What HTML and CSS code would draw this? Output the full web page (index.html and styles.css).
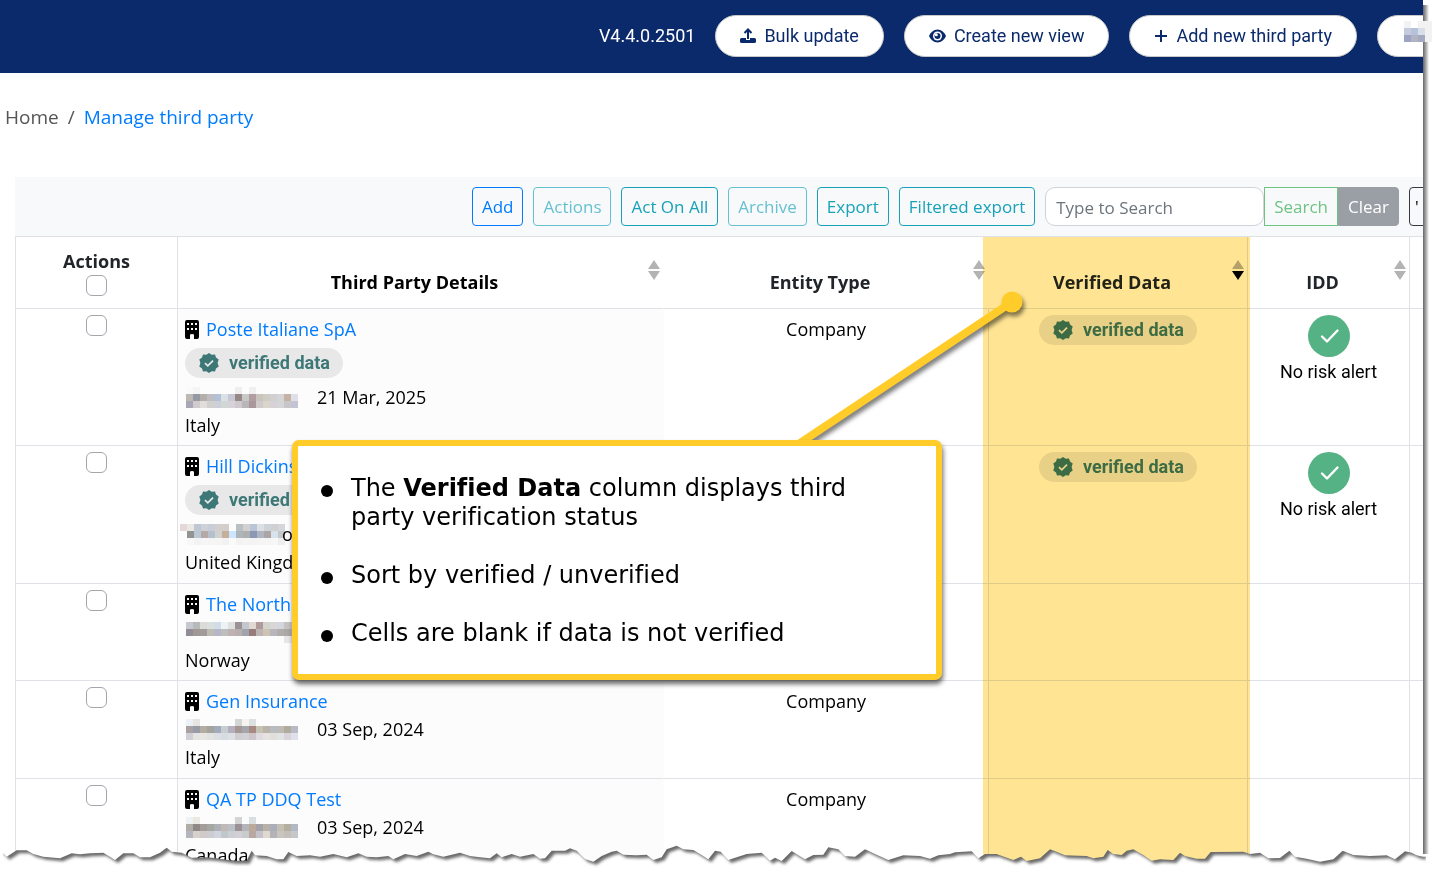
FILE: index.html
```
<!DOCTYPE html>
<html lang="en">
<head>
    <meta charset="UTF-8">
    <meta name="viewport" content="width=device-width, initial-scale=1.0">
    <title>Manage third party</title>
    <link rel="stylesheet" href="styles.css">
</head>
<body>
    <!-- Shared icons -->
    <svg class="sprite" aria-hidden="true">
        <symbol id="building" viewBox="0 0 14 19">
            <path fill-rule="evenodd" d="M2 0H12Q14 0 14 2V17Q14 19 12 19H9V15Q9 14 7 14Q5 14 5 15V19H2Q0 19 0 17V2Q0 0 2 0ZM2 3V5H4V3ZM6 3V5H8V3ZM10 3V5H12V3ZM2 8V10H4V8ZM6 8V10H8V8ZM10 8V10H12V8Z"/>
        </symbol>
        <symbol id="verified" viewBox="0 0 20 20">
            <path fill="#3d7876" d="M10 0L12.7 1.8L16 1.5L17 4.6L19.7 6.5L18.6 10L19.7 13.5L17 15.4L16 18.5L12.7 18.2L10 20L7.3 18.2L4 18.5L3 15.4L.3 13.5L1.4 10L.3 6.5L3 4.6L4 1.5L7.3 1.8Z"/>
            <path fill="none" stroke="#e8e8e8" stroke-width="1.8" d="M6 10.2L8.8 12.8L14 7.6"/>
        </symbol>
        <symbol id="tick" viewBox="0 0 42 42">
            <circle cx="21" cy="21" r="21" fill="#55b285"/>
            <path fill="none" stroke="#fff" stroke-width="2.4" stroke-linecap="round" stroke-linejoin="round" d="M14 21.5L19 26.5L29.500 15.500"/>
        </symbol>
        <symbol id="sort" viewBox="0 0 12 20">
            <path d="M6 0L12 9H0Z"/>
            <path class="down" d="M0 11H12L6 20Z"/>
        </symbol>
    </svg>

    <div class="page">
        <div class="screen">
            <header class="topbar">
                <span class="version">V4.4.0.2501</span>
                <button class="pill-btn" type="button">
                    <svg width="16" height="16" viewBox="0 0 16 16" fill="none" stroke="#0b2a6b" stroke-width="2"><path d="M8 11V1.500M4.500 5L8 1.500L11.500 5"/><path fill="#0b2a6b" stroke="none" d="M1.500 10H6V12H10V10H14.500Q16 10 16 11.500V13.500Q16 15 14.500 15H1.500Q0 15 0 13.500V11.500Q0 10 1.500 10Z"/></svg>
                    Bulk update
                </button>
                <button class="pill-btn" type="button">
                    <svg width="17" height="16" viewBox="0 0 17 16"><path fill="#0b2a6b" d="M8.500 1.500C12.500 1.500 15.500 4.500 17 8C15.500 11.500 12.500 14.500 8.500 14.500S1.500 11.500 0 8C1.500 4.500 4.500 1.500 8.500 1.500Z"/><circle cx="8.500" cy="8" r="4.500" fill="#fff"/><circle cx="8.500" cy="8" r="3" fill="#0b2a6b"/><circle cx="7.300" cy="6.800" r="1.500" fill="#fff"/></svg>
                    Create new view
                </button>
                <button class="pill-btn" type="button">
                    <svg width="14" height="14" viewBox="0 0 14 14"><path fill="none" stroke="#0b2a6b" stroke-width="2" d="M7 1V13M1 7H13"/></svg>
                    Add new third party
                </button>
                <button class="pill-btn account" type="button" aria-label="Account"></button>
            </header>

            <nav class="breadcrumb">
                <a class="home" href="#">Home</a>
                <span>/</span>
                <a href="#">Manage third party</a>
            </nav>

            <main class="grid">
                <div class="toolbar">
                    <button class="btn btn-blue" type="button">Add</button>
                    <button class="btn" type="button" disabled>Actions</button>
                    <button class="btn" type="button">Act On All</button>
                    <button class="btn" type="button" disabled>Archive</button>
                    <button class="btn" type="button">Export</button>
                    <button class="btn" type="button">Filtered export</button>
                    <div class="search">
                        <input type="text" placeholder="Type to Search" aria-label="Type to Search">
                        <button class="btn btn-search" type="button">Search</button>
                        <button class="btn btn-clear" type="button">Clear</button>
                    </div>
                    <button class="btn btn-more" type="button">'</button>
                </div>

                <table>
                    <colgroup>
                        <col class="col-actions">
                        <col>
                        <col class="col-entity">
                        <col class="col-verified">
                        <col class="col-idd">
                        <col class="col-next">
                    </colgroup>
                    <thead>
                        <tr>
                            <th class="actions"><label for="all">Actions</label><input type="checkbox" id="all"></th>
                            <th>Third Party Details<svg class="sort"><use href="#sort"/></svg></th>
                            <th class="entity">Entity Type<svg class="sort"><use href="#sort"/></svg></th>
                            <th>Verified Data<svg class="sort desc"><use href="#sort"/></svg></th>
                            <th>IDD<svg class="sort"><use href="#sort"/></svg></th>
                            <th></th>
                        </tr>
                    </thead>
                    <tbody>
                        <tr>
                            <td><input type="checkbox" aria-label="Poste Italiane SpA"></td>
                            <td class="details">
                                <div class="line"><svg class="building"><use href="#building"/></svg><a href="#">Poste Italiane SpA</a></div>
                                <div class="tag"><svg><use href="#verified"/></svg>verified data</div>
                                <div class="line"><svg class="mosaic" data-blocks="0"></svg>21 Mar, 2025</div>
                                <div class="line">Italy</div>
                            </td>
                            <td>Company</td>
                            <td><div class="tag"><svg><use href="#verified"/></svg>verified data</div></td>
                            <td class="idd"><svg><use href="#tick"/></svg><div>No risk alert</div></td>
                            <td></td>
                        </tr>
                        <tr>
                            <td><input type="checkbox" aria-label="Hill Dickinson"></td>
                            <td class="details">
                                <div class="line"><svg class="building"><use href="#building"/></svg><a href="#">Hill Dickinson</a></div>
                                <div class="tag"><svg><use href="#verified"/></svg>verified data</div>
                                <div class="line"><svg class="mosaic wide" data-blocks="1"></svg>os</div>
                                <div class="line">United Kingdom</div>
                            </td>
                            <td></td>
                            <td><div class="tag"><svg><use href="#verified"/></svg>verified data</div></td>
                            <td class="idd"><svg><use href="#tick"/></svg><div>No risk alert</div></td>
                            <td></td>
                        </tr>
                        <tr>
                            <td><input type="checkbox" aria-label="The North"></td>
                            <td class="details">
                                <div class="line"><svg class="building"><use href="#building"/></svg><a href="#">The North</a></div>
                                <div class="line"><svg class="mosaic" data-blocks="2"></svg></div>
                                <div class="line">Norway</div>
                            </td>
                            <td></td>
                            <td></td>
                            <td></td>
                            <td></td>
                        </tr>
                        <tr>
                            <td><input type="checkbox" aria-label="Gen Insurance"></td>
                            <td class="details">
                                <div class="line"><svg class="building"><use href="#building"/></svg><a href="#">Gen Insurance</a></div>
                                <div class="line"><svg class="mosaic" data-blocks="3"></svg>03 Sep, 2024</div>
                                <div class="line">Italy</div>
                            </td>
                            <td>Company</td>
                            <td></td>
                            <td></td>
                            <td></td>
                        </tr>
                        <tr>
                            <td><input type="checkbox" aria-label="QA TP DDQ Test"></td>
                            <td class="details">
                                <div class="line"><svg class="building"><use href="#building"/></svg><a href="#">QA TP DDQ Test</a></div>
                                <div class="line"><svg class="mosaic" data-blocks="4"></svg>03 Sep, 2024</div>
                                <div class="line">Canada</div>
                            </td>
                            <td>Company</td>
                            <td></td>
                            <td></td>
                            <td></td>
                        </tr>
                    </tbody>
                </table>
                <div class="highlight"></div>
            </main>
        </div>

        <!-- Callout -->
        <svg class="pointer" width="240" height="170" viewBox="0 0 240 170">
            <path d="M10 158L222 17" stroke="#ffcc29" stroke-width="8"/>
            <circle cx="222" cy="17" r="10.500" fill="#ffcc29"/>
        </svg>
        <div class="callout">
            <ul>
                <li>The <b>Verified Data</b> column displays third party verification status</li>
                <li>Sort by verified / unverified</li>
                <li>Cells are blank if data is not verified</li>
            </ul>
        </div>

        <!-- Torn paper edge -->
        <div class="side-shadow"></div>
        <svg class="mosaic account-mosaic" data-blocks="5"></svg>
        <svg class="tear" viewBox="0 0 4299 282" preserveAspectRatio="none">
            <defs>
                <path id="edge" d="M0 210L20 230 50 211 80 211 100 222 130 230 180 235 215 220 240 223 270 220 310 218 330 230 345 240 370 220 400 220 420 232 450 232 480 218 500 203 515 215 545 218 575 233 620 232 650 235 700 242 740 242 755 212 765 226 800 228 830 238 850 238 865 216 890 228 930 226 960 230 1000 222 1040 232 1075 220 1100 230 1130 232 1165 228 1180 238 1215 222 1250 228 1285 215 1300 223 1330 230 1380 218 1410 228 1440 232 1470 235 1490 220 1505 232 1535 222 1560 230 1600 222 1620 236 1635 235 1655 212 1695 212 1710 205 1730 212 1755 237 1780 245 1805 228 1835 215 1850 212 1870 224 1910 226 1940 224 1960 240 1985 232 2000 208 2030 197 2050 208 2080 210 2105 225 2125 238 2145 212 2162 215 2185 240 2210 232 2240 222 2285 218 2310 242 2325 233 2345 243 2375 213 2415 238 2440 225 2470 224 2485 202 2515 208 2535 228 2565 230 2595 208 2625 222 2665 240 2710 226 2760 228 2790 236 2815 226 2850 222 2865 217 2915 214 2935 235 2955 222 2990 222 3000 226 3040 240 3063 230 3080 243 3120 235 3150 208 3170 215 3195 226 3260 228 3280 235 3310 230 3323 210 3340 222 3365 225 3380 212 3400 208 3430 225 3455 242 3480 238 3520 240 3540 218 3555 228 3590 236 3615 236 3632 216 3730 215 3750 222 3780 218 3805 235 3840 234 3868 212 3885 230 3920 236 3960 245 4000 238 4028 212 4060 225 4110 228 4160 226 4185 238 4215 214 4235 218 4250 226 4269 230V0H0Z"/>
                <mask id="below" maskUnits="userSpaceOnUse" x="0" y="190" width="4299" height="92">
                    <rect y="190" width="4299" height="92" fill="#fff"/>
                    <use href="#edge" fill="#000"/>
                    <rect x="4269" width="30" height="230" fill="#000"/>
                </mask>
                <filter id="soft" x="0" y="0" width="1" height="1.2"><feGaussianBlur stdDeviation="5"/></filter>
            </defs>
            <g mask="url(#below)">
                <rect width="4299" height="282" fill="#fff"/>
                <use href="#edge" x="9" y="9" fill="#6a6a6a" filter="url(#soft)"/>
            </g>
        </svg>
    </div>

    <script>
        // Block colours for hidden names, one string of hex colours per row, '-' is empty
        const blocks = [
            [
                'f8fafc f5f5f5 - - - - - efedf0 - f0f0f3 - - - - - -',
                'bfb9b3 9599a3 b5afab c0bcc2 b4c0d6 d9e0e6 c6c8d4 978888 c8c8c8 b09ea0 c9c5bc ceccc3 d0d0d0 d5d5d8 c4b3a4 dfdfe8',
                'a9a6b8 d0cbcf e0ddda d0d0ce cdced8 cfd8d2 d5d3d8 cfc9cd b9b6b9 a8989b d0cbca dad6ce d5d1d4 d5d5d7 c8c6c8 c2c4d3'
            ],
            [
                'e2d9d8 e9e8e3 bfc8d2 ccd2d8 c9cdd8 d4cecd d5cccc - b9c0c2 d4d0d0 bac4d9 dce0e4 cdd3d8 d0d0d0 d5d6d9',
                '- 909593 bcc8d4 b5a9a5 b6bfcc cfd2ce c6ae98 cce6ff aeb6ba aeb0b0 8c98b4 aeb6c2 ada4a4 d6e3ec c6c7c8',
                '- f8f8f8 f3f3f3 f6f6f6 f5f5f5 f5f5f5 f2f2f2 fafafa f3f3f3 f5f5f5 f4f4f4 f5f5f5 f5f5f5 f7f7f7 eeeeee'
            ],
            [
                'c6c8d2 b7babb dbdbd8 d9dedf d0dde7 edf2f6 dfe1df 9b9297 c5c7cf e1d8d4 b09b9a d2d5cd d9d6d5 d3d6df c6c2bf d0d0d0',
                '928d94 a19795 a19c9b bdbdb5 b5b7c8 bebfbc beb2b2 b9afad a0a4ae 987c7c bdb4b4 cdc2b3 b8b6ba b1adab ada7a8 c8c0b8',
                '- - - - - - - - - - - - - - e7e7e7 ececec'
            ],
            [
                'eaf1f7 e8e4e2 - - - - - d4d6d5 f7f4ee dce0e1 - - - - - -',
                'a8a0a1 979ba8 b5aca1 a4a49f a1abba c7ced1 b4b0bd a69694 a3a6aa a78981 c4c3b4 b9b4a7 b6bcbf bfbab3 b1ab9b b8bac6',
                'd0cfd7 e6e4e3 e6e6e3 e1e2e1 dddfe5 d6dcdf dedee5 d0ced0 d1d0d5 cdc6c8 dedcdf e6e2e1 e2dfdb e2e3e6 d8d4da dee1e9'
            ],
            [
                'edf2f7 ece9e2 - - - - - d2d4d5 - d9dee1 - - - - - -',
                'b0ada6 8e8987 a39c9b a5a7a2 adb0b5 c0b9b6 bbc0c6 9b9096 b3b5bb bba99c a3a2a8 b8b1a9 aaadba c4bfb2 b4ae9f b2b8c4',
                'b4b5bd d8d0cb d0cbca cdcdd1 d1d4dd c0c7cb cbced5 d4ced5 c8cccc b9a7a4 c5c2ca dfd9d0 b6b3b8 c9c5bf c6bfb9 c5c8c8'
            ],
            [
                'f0f2f6 - f2f2f2 f2f2f2',
                'c5cbdd b5c2dc d9dfe8 f2f2f2',
                '9ba4c3 b2b4c3 a4aac0 f2f2f2'
            ]
        ];

        document.querySelectorAll('[data-blocks]').forEach(svg => {
            blocks[svg.dataset.blocks].forEach((row, y) => {
                row.split(' ').forEach((color, x) => {
                    if (color === '-') return;
                    const rect = document.createElementNS('http://www.w3.org/2000/svg', 'rect');
                    rect.setAttribute('x', x * 7);
                    rect.setAttribute('y', y * 7);
                    rect.setAttribute('width', 7);
                    rect.setAttribute('height', 7);
                    rect.setAttribute('fill', '#' + color);
                    svg.appendChild(rect);
                });
            });
        });
    </script>
</body>
</html>
```
FILE: styles.css
```
* {
    box-sizing: border-box;
}
body {
    margin: 0;
    background: #fff;
    color: #000;
    font-family: "Open Sans", "Noto Sans", sans-serif;
    font-size: 18px;
    line-height: 28px;
}
a {
    color: #007bff;
    text-decoration: none;
}
button, input {
    margin: 0;
    font-family: inherit;
    font-size: 17px;
}
svg {
    flex-shrink: 0;
}
.sprite {
    position: absolute;
    width: 0;
    height: 0;
}
.page {
    position: relative;
    height: 100vh;
    overflow: hidden;
}
.screen {
    height: 100%;
    margin-right: 10px;
    overflow: hidden;
}

/* Top bar */
.topbar {
    display: flex;
    justify-content: flex-end;
    align-items: center;
    gap: 20px;
    height: 73px;
    padding-bottom: 2px;
    background: #0b2a6b;
    font-family: Roboto, sans-serif;
    font-size: 18px;
}
.version {
    color: #fff;
}
.pill-btn {
    display: flex;
    flex-shrink: 0;
    align-items: center;
    gap: 8px;
    height: 42px;
    padding: 0 24px;
    border: 1px solid #c8c8c8;
    border-radius: 21px;
    background: #fff;
    color: #0b2a6b;
    font-family: Roboto, sans-serif;
    font-size: 18px;
    white-space: nowrap;
}
.account {
    width: 86px;
    margin-right: -40px;
}

.breadcrumb {
    display: flex;
    gap: 9px;
    padding: 30px 5px 46px;
    font-size: 19px;
    color: #555;
}
.home {
    color: #555;
}

/* Toolbar */
.grid {
    position: relative;
    margin-left: 15px;
}
.toolbar {
    display: flex;
    justify-content: flex-end;
    align-items: flex-start;
    gap: 10px;
    height: 60px;
    padding-top: 10px;
    border-bottom: 1px solid #dee2e6;
    background: #f8f9fb;
}
.btn {
    flex-shrink: 0;
    height: 39px;
    padding: 0 9px;
    border: 1px solid #17a2b8;
    border-radius: 4px;
    background: transparent;
    color: #17a2b8;
    white-space: nowrap;
}
.btn:disabled {
    opacity: 0.65;
}
.btn-blue {
    border-color: #007bff;
    color: #007bff;
}
.search {
    display: flex;
}
.search input {
    width: 219px;
    height: 39px;
    padding: 2px 10px 0;
    border: 1px solid #ced4da;
    border-radius: 10px;
    background: #fff;
}
.search input::placeholder {
    color: #6c757d;
}
.btn-search {
    border-color: #6fc383;
    border-radius: 0;
    color: #6fc383;
}
.btn-clear {
    border-color: #9a9fa5;
    border-radius: 0 4px 4px 0;
    background: #9a9fa5;
    color: #fff;
}
.btn-more {
    width: 54px;
    margin-right: -40px;
    padding: 0 5px;
    border-color: #343a40;
    color: #000;
    text-align: left;
}

/* Table */
table {
    width: 100%;
    table-layout: fixed;
    border-collapse: separate;
    border-spacing: 0;
    border-left: 1px solid #dee2e6;
}
.col-actions, .col-idd {
    width: 162px;
}
.col-entity {
    width: 325px;
}
.col-verified {
    width: 259px;
}
.col-next {
    width: 13px;
}
th, td {
    padding: 6px 7px;
    border-right: 1px solid #dee2e6;
    border-bottom: 1px solid #dee2e6;
    text-align: center;
    vertical-align: top;
}
tbody tr:nth-child(even) td {
    padding-bottom: 7px;
}
th {
    position: relative;
    padding: 10px 19px 12px 7px;
    color: #212529;
    font-weight: 700;
    vertical-align: bottom;
}
th:nth-child(2), th.entity, td.details {
    border-right-color: transparent;
}
th:nth-child(2) {
    color: #000;
}
th:last-child, td:last-child {
    padding: 0;
    border-right: none;
}
th.actions {
    padding-right: 7px;
}
th.actions label {
    display: block;
}
td.details {
    background: #fcfcfc;
    text-align: left;
}
input[type="checkbox"] {
    display: block;
    width: 21px;
    height: 21px;
    margin: 0 auto;
    border: 1px solid #a5a5ad;
    border-radius: 6px;
    background: #fff;
    appearance: none;
}
.sort {
    position: absolute;
    right: 3px;
    bottom: 28px;
    width: 12px;
    height: 20px;
    fill: #b3b3b3;
}
.down {
    fill: var(--down, #b3b3b3);
}
.desc {
    --down: #000;
}
.line {
    display: flex;
    align-items: center;
    height: 28px;
    white-space: nowrap;
}
.building {
    width: 14px;
    height: 19px;
    margin-right: 7px;
}
.tag {
    display: flex;
    align-items: center;
    gap: 10px;
    width: 158px;
    height: 30px;
    margin: 0 auto;
    padding: 0 14px;
    border-radius: 15px;
    background: #e8e8e8;
    color: #3d7876;
    font-family: Roboto, sans-serif;
    font-size: 18px;
    font-weight: 700;
    white-space: nowrap;
}
.details .tag {
    margin: 5px 0;
}
.tag svg {
    width: 20px;
    height: 20px;
}
.idd {
    font-family: Roboto, sans-serif;
    font-size: 18px;
}
.idd svg {
    display: block;
    width: 42px;
    height: 42px;
    margin: 0 auto 1px;
}
.mosaic {
    width: 112px;
    height: 21px;
    margin: 0 19px 0 1px;
}
.mosaic.wide {
    width: 105px;
    margin: 0 -3px 0 -5px;
}
.highlight {
    position: absolute;
    top: 60px;
    right: 173px;
    bottom: 0;
    width: 267px;
    background: #ffe593;
    mix-blend-mode: multiply;
}

/* Callout */
.pointer {
    position: absolute;
    top: 285px;
    left: 790px;
    filter: drop-shadow(2px 4px 2px rgba(0, 0, 0, 0.5));
}
.callout {
    position: absolute;
    top: 440px;
    left: 292px;
    width: 650px;
    padding: 28px 70px 26px 53px;
    border: 6px solid #ffcc29;
    border-radius: 7px;
    background: #fff;
    box-shadow: 1px 4px 5px rgba(0, 0, 0, 0.6);
    font-family: "DejaVu Sans", sans-serif;
    font-size: 24px;
    font-variant-ligatures: none;
    line-height: 29px;
}
.callout ul {
    margin: 0;
    padding: 0;
    list-style: none;
}
.callout li {
    position: relative;
}
.callout li + li {
    margin-top: 29px;
}
.callout li::before {
    content: "";
    position: absolute;
    top: 11px;
    left: -30px;
    width: 12px;
    height: 12px;
    border-radius: 50%;
    background: #000;
}

.side-shadow {
    position: absolute;
    top: 5px;
    right: 4px;
    bottom: 20px;
    width: 6px;
    background: linear-gradient(to right, #666, #aaa 50%, #fff);
}
.account-mosaic {
    position: absolute;
    top: 21px;
    right: 1px;
    width: 28px;
    margin: 0;
}
.tear {
    position: absolute;
    bottom: 0;
    left: 0;
    width: 100%;
    height: 94px;
}
```
